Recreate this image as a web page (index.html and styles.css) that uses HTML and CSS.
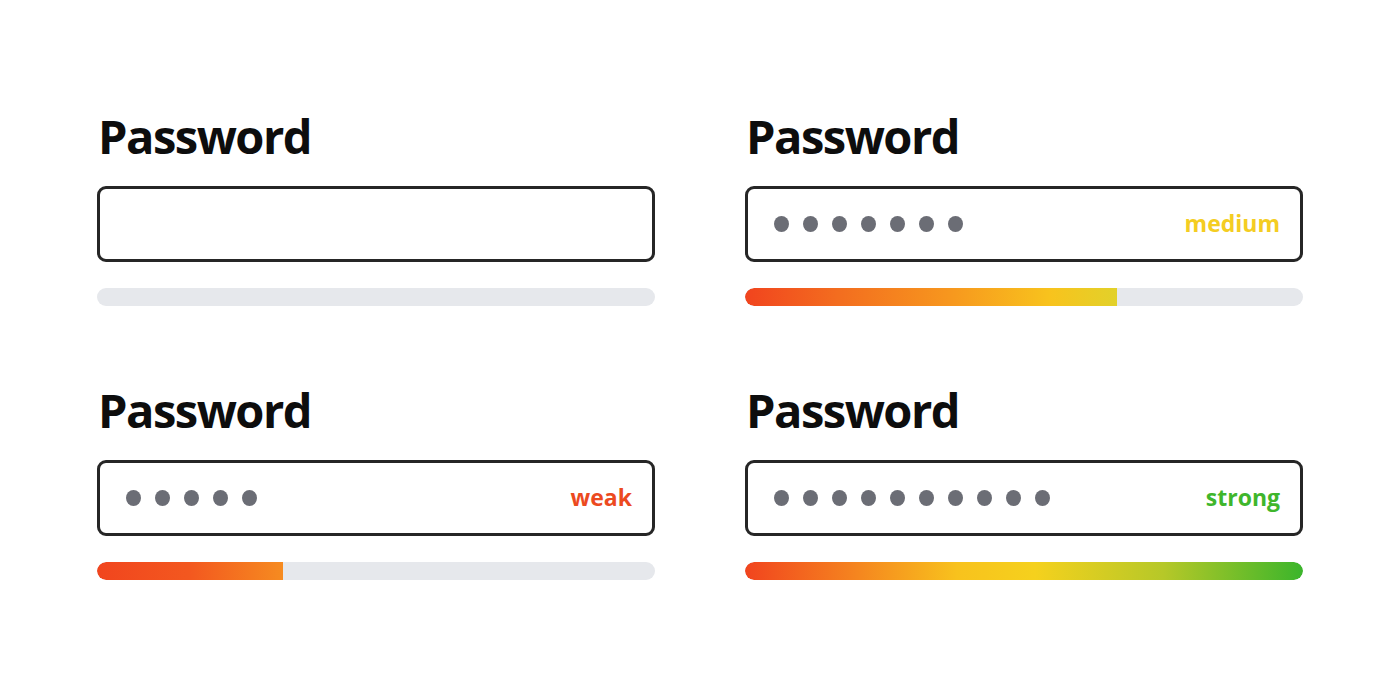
FILE: index.html
```html
<!DOCTYPE html>
<html lang="en">
<head>
    <meta charset="UTF-8">
    <meta name="viewport" content="width=device-width, initial-scale=1.0">
    <title>Password Strength</title>

    <link rel="stylesheet" href="styles.css">
</head>
<body>

    <div class="grid">
        <!-- Empty field -->
        <div class="field">
            <h2>Password</h2>
            <div class="box"></div>
            <div class="meter"></div>
        </div>

        <!-- Medium password -->
        <div class="field">
            <h2>Password</h2>
            <div class="box">
                <div class="dots">
                    <span></span><span></span><span></span><span></span><span></span><span></span><span></span>
                </div>
                <span class="level medium">medium</span>
            </div>
            <div class="meter"><div class="fill fill-medium" style="width: 66.7%;"></div></div>
        </div>

        <!-- Weak password -->
        <div class="field">
            <h2>Password</h2>
            <div class="box">
                <div class="dots">
                    <span></span><span></span><span></span><span></span><span></span>
                </div>
                <span class="level weak">weak</span>
            </div>
            <div class="meter"><div class="fill fill-weak" style="width: 33.4%;"></div></div>
        </div>

        <!-- Strong password -->
        <div class="field">
            <h2>Password</h2>
            <div class="box">
                <div class="dots">
                    <span></span><span></span><span></span><span></span><span></span><span></span><span></span><span></span><span></span><span></span>
                </div>
                <span class="level strong">strong</span>
            </div>
            <div class="meter"><div class="fill fill-strong" style="width: 100%;"></div></div>
        </div>
    </div>

</body>
</html>
```

FILE: styles.css
```css
/* Page */
body {
    margin: 0;
    padding: 113px 97px 0;
    background: #fff;
    color: #111;
    font-family: 'Open Sans', 'Noto Sans', sans-serif;
}

/* Two columns of fields */
.grid {
    display: grid;
    grid-template-columns: 558px 558px;
    column-gap: 90px;
    row-gap: 81px;
}

.field {
    display: flex;
    flex-direction: column;
}

h2 {
    margin: 0 0 26px 1px;
    font-size: 47px;
    font-weight: 700;
    line-height: 1;
    letter-spacing: -1.5px;
    color: #0d0d0d;
}

/* Input box */
.box {
    height: 76px;
    box-sizing: border-box;
    border: 3px solid #262626;
    border-radius: 9px;
    display: flex;
    align-items: center;
    justify-content: space-between;
    padding: 0 20px 0 26px;
}

.dots {
    display: flex;
    gap: 14px;
}

.dots span {
    width: 15px;
    height: 16px;
    border-radius: 50%;
    background: #6b6d75;
}

.level {
    font-size: 23px;
    font-weight: 700;
    line-height: 1;
    margin-top: -2px;
}

.weak { color: #ec4a1f; }
.medium { color: #f4cd22; }
.strong { color: #3fb62c; }

/* Strength meter */
.meter {
    margin-top: 26px;
    height: 18px;
    border-radius: 9px;
    background: #e6e8ec;
    overflow: hidden;
}

.fill {
    height: 100%;
    border-radius: 9px 0 0 9px;
}

.fill-weak {
    background: linear-gradient(90deg, #f1451e, #f3581f 50%, #f68b20);
}

.fill-medium {
    background: linear-gradient(90deg, #f1441e, #f36d1f 25%, #f7971e 55%, #f8c31d 82%, #e2d12a);
}

.fill-strong {
    border-radius: 9px;
    background: linear-gradient(90deg, #f1441e, #f5851f 20%, #f8c21d 38%, #f5d11d 52%, #b6c828 75%, #3bb52b);
}
```
